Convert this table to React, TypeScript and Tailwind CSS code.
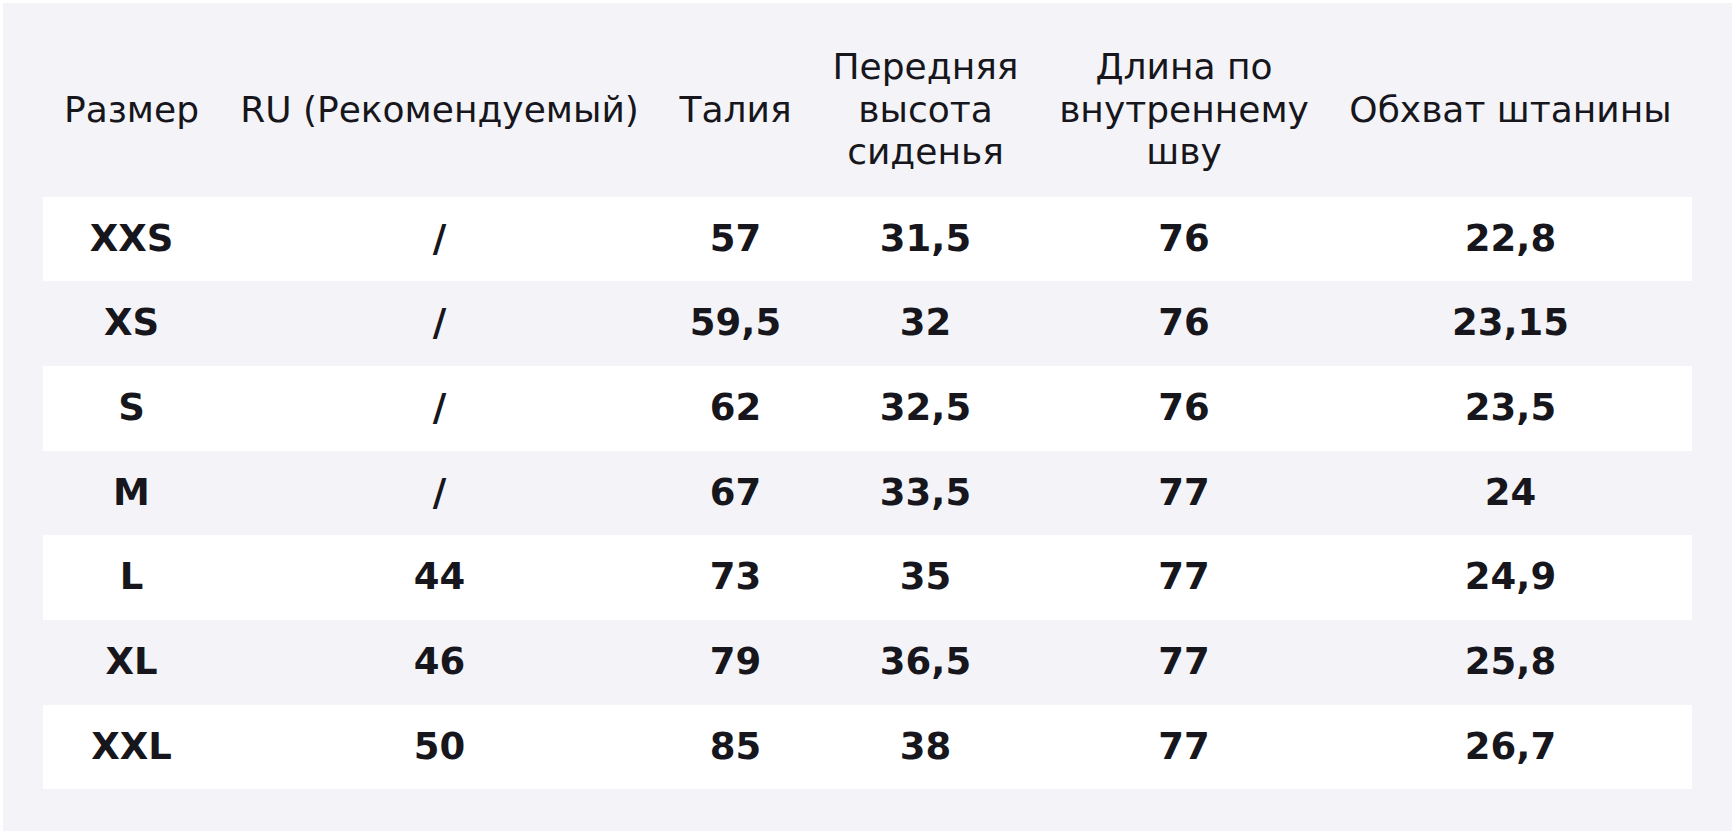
const headers = [
  "Размер",
  "RU (Рекомендуемый)",
  "Талия",
  "Передняя высота сиденья",
  "Длина по внутреннему шву",
  "Обхват штанины",
];

const rows: string[][] = [
  ["XXS", "/", "57", "31,5", "76", "22,8"],
  ["XS", "/", "59,5", "32", "76", "23,15"],
  ["S", "/", "62", "32,5", "76", "23,5"],
  ["M", "/", "67", "33,5", "77", "24"],
  ["L", "44", "73", "35", "77", "24,9"],
  ["XL", "46", "79", "36,5", "77", "25,8"],
  ["XXL", "50", "85", "38", "77", "26,7"],
];

const SizeTable = () => {
  return (
    <table className="w-full table-fixed border-collapse text-[#16161c]">
      <colgroup>
        <col className="w-[177px]" />
        <col className="w-[439px]" />
        <col className="w-[153px]" />
        <col className="w-[227px]" />
        <col className="w-[290px]" />
        <col className="w-[363px]" />
      </colgroup>
      <thead>
        <tr>
          {headers.map((h) => (
            <th
              key={h}
              className="px-[18px] pt-[22px] pb-[23px] text-center align-middle text-[36px] font-normal leading-[42.5px]"
            >
              {h}
            </th>
          ))}
        </tr>
      </thead>
      <tbody>
        {rows.map((row, i) => (
          <tr key={row[0]} className={i % 2 == 0 ? "bg-white" : "bg-[#f4f4f8]"}>
            {row.map((cell, j) => (
              <td
                key={j}
                className="h-[84.7px] px-[18px] py-0 text-center align-middle text-[37px] font-bold leading-[42.5px]"
              >
                {cell}
              </td>
            ))}
          </tr>
        ))}
      </tbody>
    </table>
  );
};

export default function App() {
  return (
    <div className="min-h-[834px] bg-white p-[3px] font-['DejaVu_Sans',sans-serif]">
      <div className="bg-[#f4f4f8] px-[40px] pt-[21px] pb-[42px]">
        <SizeTable />
      </div>
    </div>
  );
}
